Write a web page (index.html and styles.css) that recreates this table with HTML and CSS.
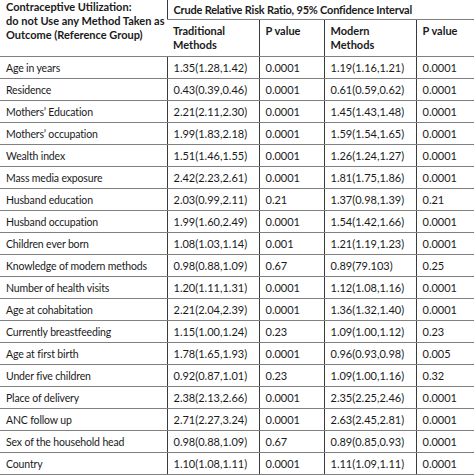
FILE: index.html
```html
<!DOCTYPE html>
<html>
<head>
<meta charset="utf-8">
<link rel="stylesheet" href="styles.css">
</head>
<body>
<table class="rr">
<colgroup>
<col class="c-var"><col class="c-est"><col class="c-p"><col class="c-est"><col class="c-p2">
</colgroup>
<thead>
<tr class="h1">
<th rowspan="2" class="top-left">Contraceptive Utilization:<br>do not Use any Method Taken as<br>Outcome (Reference Group)</th>
<th colspan="4" class="span">Crude Relative Risk Ratio, 95% Confidence Interval</th>
</tr>
<tr class="h2">
<th>Traditional<br>Methods</th>
<th>P value</th>
<th>Modern<br>Methods</th>
<th>P value</th>
</tr>
</thead>
<tbody>
<tr><td>Age in years</td><td>1.35(1.28,1.42)</td><td>0.0001</td><td>1.19(1.16,1.21)</td><td>0.0001</td></tr>
<tr><td>Residence</td><td>0.43(0.39,0.46)</td><td>0.0001</td><td>0.61(0.59,0.62)</td><td>0.0001</td></tr>
<tr><td>Mothers’ Education</td><td>2.21(2.11,2.30)</td><td>0.0001</td><td>1.45(1.43,1.48)</td><td>0.0001</td></tr>
<tr><td>Mothers’ occupation</td><td>1.99(1.83,2.18)</td><td>0.0001</td><td>1.59(1.54,1.65)</td><td>0.0001</td></tr>
<tr><td>Wealth index</td><td>1.51(1.46,1.55)</td><td>0.0001</td><td>1.26(1.24,1.27)</td><td>0.0001</td></tr>
<tr><td>Mass media exposure</td><td>2.42(2.23,2.61)</td><td>0.0001</td><td>1.81(1.75,1.86)</td><td>0.0001</td></tr>
<tr><td>Husband education</td><td>2.03(0.99,2.11)</td><td>0.21</td><td>1.37(0.98,1.39)</td><td>0.21</td></tr>
<tr><td>Husband occupation</td><td>1.99(1.60,2.49)</td><td>0.0001</td><td>1.54(1.42,1.66)</td><td>0.0001</td></tr>
<tr><td>Children ever born</td><td>1.08(1.03,1.14)</td><td>0.001</td><td>1.21(1.19,1.23)</td><td>0.0001</td></tr>
<tr><td>Knowledge of modern methods</td><td>0.98(0.88,1.09)</td><td>0.67</td><td>0.89(79.103)</td><td>0.25</td></tr>
<tr><td>Number of health visits</td><td>1.20(1.11,1.31)</td><td>0.0001</td><td>1.12(1.08,1.16)</td><td>0.0001</td></tr>
<tr><td>Age at cohabitation</td><td>2.21(2.04,2.39)</td><td>0.0001</td><td>1.36(1.32,1.40)</td><td>0.0001</td></tr>
<tr><td>Currently breastfeeding</td><td>1.15(1.00,1.24)</td><td>0.23</td><td>1.09(1.00,1.12)</td><td>0.23</td></tr>
<tr><td>Age at first birth</td><td>1.78(1.65,1.93)</td><td>0.0001</td><td>0.96(0.93,0.98)</td><td>0.005</td></tr>
<tr><td>Under five children</td><td>0.92(0.87,1.01)</td><td>0.23</td><td>1.09(1.00,1.16)</td><td>0.32</td></tr>
<tr><td>Place of delivery</td><td>2.38(2.13,2.66)</td><td>0.0001</td><td>2.35(2.25,2.46)</td><td>0.0001</td></tr>
<tr><td>ANC follow up</td><td>2.71(2.27,3.24)</td><td>0.0001</td><td>2.63(2.45,2.81)</td><td>0.0001</td></tr>
<tr><td>Sex of the household head</td><td>0.98(0.88,1.09)</td><td>0.67</td><td>0.89(0.85,0.93)</td><td>0.0001</td></tr>
<tr><td>Country</td><td>1.10(1.08,1.11)</td><td>0.0001</td><td>1.11(1.09,1.11)</td><td>0.0001</td></tr>
</tbody>
</table>
</body>
</html>
```
FILE: styles.css
```css
html, body {
  margin: 0;
  padding: 0;
  background: #ffffff;
}
.rr {
  border-collapse: collapse;
  table-layout: fixed;
  width: 480px;
  font-family: Lato, "Liberation Sans", sans-serif;
  font-size: 11px;
  color: #1a1a1a;
}
.c-var { width: 167px; }
.c-est { width: 92px; }
.c-p { width: 65px; }
.c-p2 { width: 64px; }
.rr th, .rr td {
  text-align: left;
  padding: 0 6px;
  border-left: 1px solid #3a3a3a;
  border-bottom: 1px solid #808080;
  line-height: 14px;
  white-space: nowrap;
}
.rr th:first-child, .rr td:first-child {
  border-left: none;
}
.rr td:first-child {
  font-size: 10.5px;
  letter-spacing: -0.15px;
}
.rr th {
  font-weight: 700;
  vertical-align: top;
}
.top-left {
  padding-top: 3px;
  line-height: 14.5px;
}
.top-left, .span {
  border-left: none;
}
.h1 .span {
  border-left: 1px solid #3a3a3a;
  height: 16px;
  padding-top: 3px;
  vertical-align: top;
  letter-spacing: -0.2px;
}
.h2 th {
  height: 32px;
  padding-top: 4px;
}
.rr td {
  height: 21px;
  vertical-align: middle;
}
```
